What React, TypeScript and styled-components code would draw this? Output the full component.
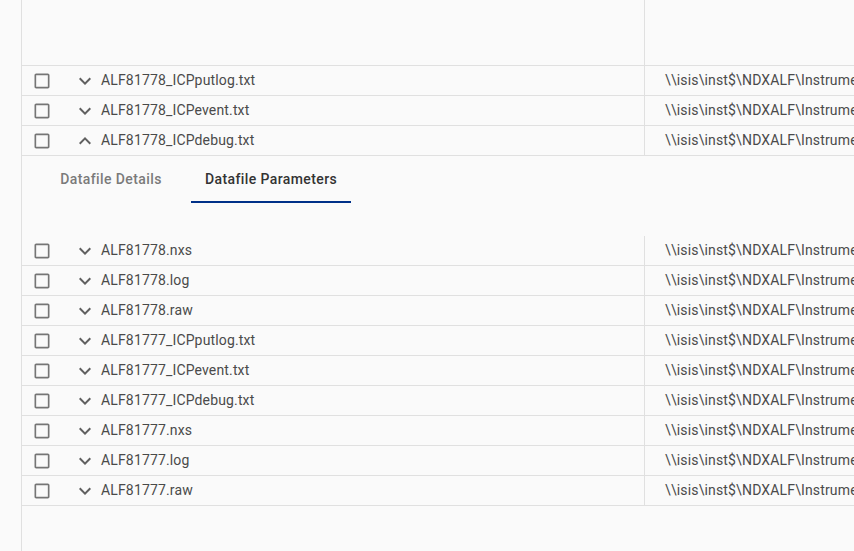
import React from 'react';
import styled, { createGlobalStyle } from 'styled-components';

interface DatafileRow {
  name: string;
  location: string;
  expanded?: boolean;
}

const base = '\\\\isis\\inst$\\NDXALF\\Instrument\\data\\cycle_19_4\\';

const topRows: DatafileRow[] = [
  { name: 'ALF81778_ICPputlog.txt', location: base + 'ALF81778_ICPputlog.txt' },
  { name: 'ALF81778_ICPevent.txt', location: base + 'ALF81778_ICPevent.txt' },
  { name: 'ALF81778_ICPdebug.txt', location: base + 'ALF81778_ICPdebug.txt', expanded: true },
];

const bottomRows: DatafileRow[] = [
  'ALF81778.nxs',
  'ALF81778.log',
  'ALF81778.raw',
  'ALF81777_ICPputlog.txt',
  'ALF81777_ICPevent.txt',
  'ALF81777_ICPdebug.txt',
  'ALF81777.nxs',
  'ALF81777.log',
  'ALF81777.raw',
].map((name) => ({ name, location: base + name }));

const GlobalStyle = createGlobalStyle`
  *, *::before, *::after {
    box-sizing: border-box;
  }
  html, body {
    margin: 0;
    padding: 0;
    background: #fafafa;
    overflow: hidden;
  }
  body {
    font-family: Roboto, "Liberation Sans", sans-serif;
    -webkit-font-smoothing: antialiased;
  }
`;

const Page = styled.div`
  display: flex;
  width: 854px;
  height: 551px;
  overflow: hidden;
`;

const Gutter = styled.div`
  width: 22px;
  flex-shrink: 0;
  border-right: 1px solid #e0e0e0;
`;

const Table = styled.div`
  display: flex;
  flex-direction: column;
  width: 1100px;
  flex-shrink: 0;
`;

const Row = styled.div<{ $height: number }>`
  display: grid;
  grid-template-columns: 623px 1fr;
  height: ${(p) => p.$height}px;
  border-bottom: 1px solid #e0e0e0;
`;

const NameCell = styled.div`
  display: flex;
  align-items: center;
  padding-left: 10px;
  border-right: 1px solid #e0e0e0;
  min-width: 0;
`;

const PathCell = styled.div`
  display: flex;
  align-items: center;
  padding: 0 0 2px 20px;
  white-space: nowrap;
  font-size: 14px;
  letter-spacing: 0.15px;
  color: #4a4a4a;
  overflow: hidden;
`;

const CheckIcon = styled.svg`
  width: 20px;
  height: 20px;
  fill: #767676;
  flex-shrink: 0;
`;

const ChevronIcon = styled.svg`
  width: 24px;
  height: 24px;
  fill: #606060;
  margin-left: 21px;
  flex-shrink: 0;
`;

const FileName = styled.span`
  margin-left: 4px;
  padding-bottom: 2px;
  font-size: 14px;
  letter-spacing: 0.15px;
  color: #4a4a4a;
  white-space: nowrap;
`;

const Panel = styled.div`
  height: 80px;
  padding-left: 9px;
`;

const TabList = styled.div`
  display: flex;
  height: 47px;
`;

const Tab = styled.div<{ $active?: boolean }>`
  width: 160px;
  display: flex;
  align-items: center;
  justify-content: center;
  font-size: 14px;
  font-weight: 500;
  letter-spacing: 0.4px;
  color: ${(p) => (p.$active ? '#333333' : '#7a7a7a')};
  border-bottom: 2px solid ${(p) => (p.$active ? '#003088' : 'transparent')};
`;

const Checkbox = () => (
  <CheckIcon viewBox="0 0 24 24">
    <path d="M19 5v14H5V5h14m0-2H5c-1.11 0-2 .9-2 2v14c0 1.1.89 2 2 2h14c1.1 0 2-.9 2-2V5c0-1.1-.9-2-2-2z" />
  </CheckIcon>
);

const Chevron: React.FC<{ up?: boolean }> = ({ up }) => (
  <ChevronIcon viewBox="0 0 24 24">
    {up ? (
      <path d="M12 8l-6 6 1.41 1.41L12 10.83l4.59 4.58L18 14z" />
    ) : (
      <path d="M16.59 8.59 12 13.17 7.41 8.59 6 10l6 6 6-6z" />
    )}
  </ChevronIcon>
);

const FileRow: React.FC<{ row: DatafileRow }> = ({ row }) => (
  <Row $height={30}>
    <NameCell>
      <Checkbox />
      <Chevron up={row.expanded} />
      <FileName>{row.name}</FileName>
    </NameCell>
    <PathCell>{row.location}</PathCell>
  </Row>
);

const App: React.FC = () => (
  <>
    <GlobalStyle />
    <Page>
      <Gutter />
      <Table>
        <Row $height={66}>
          <NameCell />
          <div />
        </Row>
        {topRows.map((r) => (
          <FileRow key={r.name} row={r} />
        ))}
        <Panel>
          <TabList>
            <Tab>Datafile Details</Tab>
            <Tab $active>Datafile Parameters</Tab>
          </TabList>
        </Panel>
        {bottomRows.map((r) => (
          <FileRow key={r.name} row={r} />
        ))}
      </Table>
    </Page>
  </>
);

export default App;
